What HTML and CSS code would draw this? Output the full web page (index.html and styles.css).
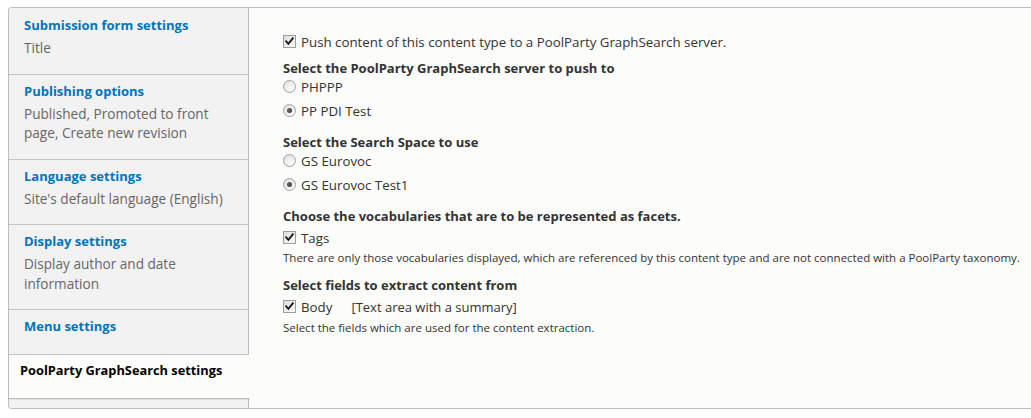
FILE: index.html
```
<!DOCTYPE html>
<html lang="en">
<head>
<meta charset="utf-8">
<title>PoolParty GraphSearch settings</title>
<link rel="stylesheet" href="styles.css">
</head>
<body>
<div class="page">
  <div class="vtabs">
    <ul class="tablist">
      <li class="tab tab-first"><a class="tab-title" href="#">Submission form settings</a><span class="tab-summary">Title</span></li>
      <li class="tab"><a class="tab-title" href="#">Publishing options</a><span class="tab-summary">Published, Promoted to front page, Create new revision</span></li>
      <li class="tab"><a class="tab-title" href="#">Language settings</a><span class="tab-summary">Site's default language (English)</span></li>
      <li class="tab"><a class="tab-title" href="#">Display settings</a><span class="tab-summary">Display author and date information</span></li>
      <li class="tab tab-plain"><a class="tab-title" href="#">Menu settings</a></li>
      <li class="tab selected"><span class="tab-title">PoolParty GraphSearch settings</span></li>
      <li class="tab-fill"></li>
    </ul>
    <div class="pane">
      <div class="option option-push">
        <span class="cb"><svg viewBox="0 0 13 13" width="13" height="13"><path d="M3.2 6.4 L5.4 8.8 L9.8 3.4" fill="none" stroke="#1a1a1a" stroke-width="1.9" stroke-linecap="square"/></svg></span>
        <span class="opt-text">Push content of this content type to a PoolParty GraphSearch server.</span>
      </div>

      <div class="group group-server">
        <div class="label">Select the PoolParty GraphSearch server to push to</div>
        <div class="option radio-row"><span class="radio"></span><span class="opt-text">PHPPP</span></div>
        <div class="option radio-row"><span class="radio on"></span><span class="opt-text">PP PDI Test</span></div>
      </div>

      <div class="group group-space">
        <div class="label">Select the Search Space to use</div>
        <div class="option radio-row"><span class="radio"></span><span class="opt-text">GS Eurovoc</span></div>
        <div class="option radio-row"><span class="radio on"></span><span class="opt-text">GS Eurovoc Test1</span></div>
      </div>

      <div class="group group-vocab">
        <div class="label">Choose the vocabularies that are to be represented as facets.</div>
        <div class="option check-row">
          <span class="cb"><svg viewBox="0 0 13 13" width="13" height="13"><path d="M3.2 6.4 L5.4 8.8 L9.8 3.4" fill="none" stroke="#1a1a1a" stroke-width="1.9" stroke-linecap="square"/></svg></span>
          <span class="opt-text">Tags</span>
        </div>
        <div class="desc">There are only those vocabularies displayed, which are referenced by this content type and are not connected with a PoolParty taxonomy.</div>
      </div>

      <div class="group group-fields">
        <div class="label">Select fields to extract content from</div>
        <div class="option check-row">
          <span class="cb"><svg viewBox="0 0 13 13" width="13" height="13"><path d="M3.2 6.4 L5.4 8.8 L9.8 3.4" fill="none" stroke="#1a1a1a" stroke-width="1.9" stroke-linecap="square"/></svg></span>
          <span class="opt-text">Body</span><span class="field-type">[Text area with a summary]</span>
        </div>
        <div class="desc">Select the fields which are used for the content extraction.</div>
      </div>
    </div>
  </div>
</div>
</body>
</html>
```

FILE: styles.css
```
html, body {
  margin: 0;
  padding: 0;
  background: #ffffff;
  overflow: hidden;
}

body {
  font-family: "Open Sans", "Liberation Sans", sans-serif;
  font-size: 13px;
  color: #333333;
}

.page {
  padding: 7px 0 0 8px;
}

.vtabs {
  display: flex;
  height: 402px;
  box-sizing: border-box;
  border: 1px solid #bdbdbd;
  border-right: 0;
  border-radius: 4px 0 0 4px;
  background: #fcfcfa;
}

.tablist {
  list-style: none;
  margin: 0;
  padding: 0;
  width: 239px;
  flex: 0 0 239px;
  display: flex;
  flex-direction: column;
  background: #f2f2f2;
  border-right: 1px solid #bdbdbd;
  border-radius: 4px 0 0 4px;
}

.tab {
  padding: 7px 15px 16px 15px;
  border-bottom: 1px solid #c4c4c4;
}

.tab-first {
  padding-top: 8px;
}

.tab-plain {
  padding-bottom: 19px;
}

.tab-title {
  display: block;
  font-weight: bold;
  line-height: 18px;
  color: #0074bd;
  text-decoration: none;
}

.tab-summary {
  display: block;
  margin-top: 4px;
  font-size: 13.6px;
  line-height: 19.5px;
  color: #666666;
}

.tab.selected {
  background: #fcfcfa;
  margin-right: -1px;
  padding: 6px 15px 19px 11px;
  border-bottom-color: #bdbdbd;
  box-shadow: 0 1px 1px rgba(0, 0, 0, 0.06);
}

.tab.selected .tab-title {
  color: #000000;
  font-size: 12.8px;
}

.tab-fill {
  flex: 1;
  border-radius: 0 0 0 4px;
}

.pane {
  flex: 1;
  padding: 25px 0 0 34px;
}

.option {
  display: flex;
  align-items: center;
  height: 18px;
  line-height: 18px;
  font-size: 13.3px;
}

.opt-text {
  margin-left: 5px;
}

.field-type {
  margin-left: 19px;
  font-size: 13px;
}

.cb {
  display: block;
  box-sizing: border-box;
  width: 13px;
  height: 13px;
  border: 1px solid #9d9d9d;
  background: linear-gradient(135deg, #dcdcdc 0%, #efefef 55%, #fdfdfd 100%);
  position: relative;
  top: -1px;
}

.cb svg {
  display: block;
  margin: -1px 0 0 -1px;
}

.radio {
  display: block;
  box-sizing: border-box;
  width: 13px;
  height: 13px;
  border-radius: 50%;
  border: 1px solid #a3a3a3;
  background: radial-gradient(circle at 65% 70%, #fcfcfc 0%, #e8e8e8 60%, #d4d4d4 100%);
  position: relative;
  top: -1px;
}

.radio.on::after {
  content: "";
  position: absolute;
  left: 3px;
  top: 3px;
  width: 5px;
  height: 5px;
  border-radius: 50%;
  background: radial-gradient(circle at 40% 40%, #6a6a6a 0%, #2a2a2a 100%);
}

.label {
  font-weight: bold;
  line-height: 18px;
  color: #333333;
}

.group-server {
  margin-top: 8px;
}

.group-space,
.group-vocab {
  margin-top: 13px;
}

.group-fields {
  margin-top: 10px;
}

.radio-row {
  margin-top: 6px;
}

.label + .radio-row {
  margin-top: 1px;
}

.check-row {
  margin-top: 4px;
}

.desc {
  margin-top: 3px;
  font-size: 11.5px;
  line-height: 16px;
  color: #333333;
}

.group-fields .desc {
  margin-top: 4px;
}
```
